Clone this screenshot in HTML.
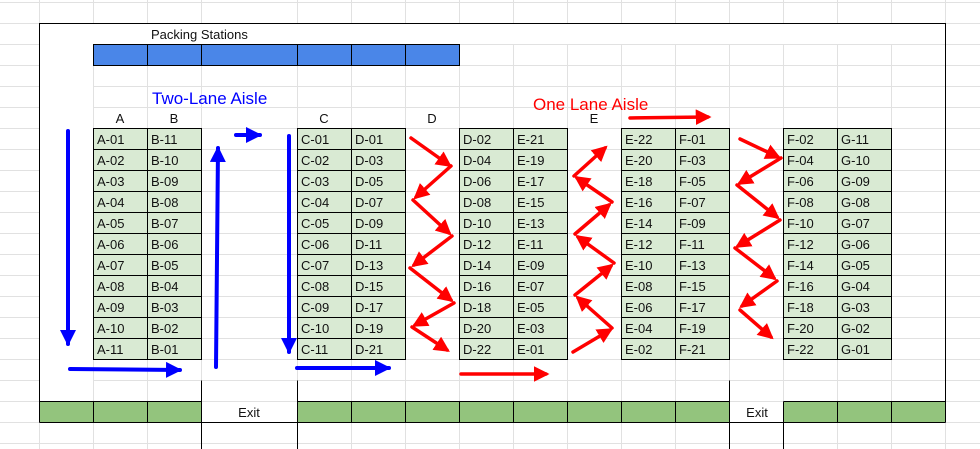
<!DOCTYPE html>
<html><head><meta charset="utf-8"><style>
html,body{margin:0;padding:0;background:#fff;}
svg{display:block;}
text{font-family:"Liberation Sans",Arial,sans-serif;font-size:13px;fill:#111;}
</style></head><body>
<svg width="980" height="449" viewBox="0 0 980 449" xmlns="http://www.w3.org/2000/svg">
<defs>
<marker id="rb" markerWidth="4.5" markerHeight="4.5" refX="3.5" refY="2.25" orient="auto" markerUnits="strokeWidth"><path d="M0,0 L4.5,2.25 L0,4.5 Z" fill="#ff0000"/></marker>
<marker id="bb" markerWidth="4" markerHeight="4" refX="3.5" refY="2" orient="auto" markerUnits="strokeWidth"><path d="M0,0 L4,2 L0,4 Z" fill="#0000ff"/></marker>
<g id="blk">
<rect x="0" y="0" width="108" height="231" fill="none" stroke="#000" stroke-width="1"/>
<path d="M54,0V231M0,21H108M0,42H108M0,63H108M0,84H108M0,105H108M0,126H108M0,147H108M0,168H108M0,189H108M0,210H108" fill="none" stroke="#000" stroke-width="1"/>
</g>
</defs>
<g stroke="#e1e1e1" stroke-width="1">
<line x1="39.5" y1="0" x2="39.5" y2="449"/><line x1="93.5" y1="0" x2="93.5" y2="449"/><line x1="147.5" y1="0" x2="147.5" y2="449"/><line x1="201.5" y1="0" x2="201.5" y2="449"/><line x1="297.5" y1="0" x2="297.5" y2="449"/><line x1="351.5" y1="0" x2="351.5" y2="449"/><line x1="405.5" y1="0" x2="405.5" y2="449"/><line x1="459.5" y1="0" x2="459.5" y2="449"/><line x1="513.5" y1="0" x2="513.5" y2="449"/><line x1="567.5" y1="0" x2="567.5" y2="449"/><line x1="621.5" y1="0" x2="621.5" y2="449"/><line x1="675.5" y1="0" x2="675.5" y2="449"/><line x1="729.5" y1="0" x2="729.5" y2="449"/><line x1="783.5" y1="0" x2="783.5" y2="449"/><line x1="837.5" y1="0" x2="837.5" y2="449"/><line x1="891.5" y1="0" x2="891.5" y2="449"/><line x1="945.5" y1="0" x2="945.5" y2="449"/>
<line x1="0" y1="2.5" x2="980" y2="2.5"/><line x1="0" y1="23.5" x2="980" y2="23.5"/><line x1="0" y1="44.5" x2="980" y2="44.5"/><line x1="0" y1="65.5" x2="980" y2="65.5"/><line x1="0" y1="86.5" x2="980" y2="86.5"/><line x1="0" y1="107.5" x2="980" y2="107.5"/><line x1="0" y1="128.5" x2="980" y2="128.5"/><line x1="0" y1="149.5" x2="980" y2="149.5"/><line x1="0" y1="170.5" x2="980" y2="170.5"/><line x1="0" y1="191.5" x2="980" y2="191.5"/><line x1="0" y1="212.5" x2="980" y2="212.5"/><line x1="0" y1="233.5" x2="980" y2="233.5"/><line x1="0" y1="254.5" x2="980" y2="254.5"/><line x1="0" y1="275.5" x2="980" y2="275.5"/><line x1="0" y1="296.5" x2="980" y2="296.5"/><line x1="0" y1="317.5" x2="980" y2="317.5"/><line x1="0" y1="338.5" x2="980" y2="338.5"/><line x1="0" y1="359.5" x2="980" y2="359.5"/><line x1="0" y1="380.5" x2="980" y2="380.5"/><line x1="0" y1="401.5" x2="980" y2="401.5"/><line x1="0" y1="422.5" x2="980" y2="422.5"/><line x1="0" y1="443.5" x2="980" y2="443.5"/>
</g>
<rect x="40" y="24" width="53" height="377" fill="#fff"/>
<rect x="40" y="24" width="905" height="20" fill="#fff"/>
<g fill="#d9ead3">
<rect x="93.5" y="128.5" width="108" height="231"/>
<rect x="297.5" y="128.5" width="108" height="231"/>
<rect x="459.5" y="128.5" width="108" height="231"/>
<rect x="621.5" y="128.5" width="108" height="231"/>
<rect x="783.5" y="128.5" width="108" height="231"/>
</g>
<rect x="93.5" y="44.5" width="366" height="21" fill="#4a86e8"/>
<g fill="#93c47d">
<rect x="39.5" y="401.5" width="162" height="21"/>
<rect x="297.5" y="401.5" width="432" height="21"/>
<rect x="783.5" y="401.5" width="162" height="21"/>
</g>
<g stroke="#000" stroke-width="1" fill="none">
<path d="M39.5,422.5 V23.5 H945.5 V422.5"/>
<rect x="93.5" y="44.5" width="366" height="21"/>
<path d="M147.5,44.5V65.5M201.5,44.5V65.5M297.5,44.5V65.5M351.5,44.5V65.5M405.5,44.5V65.5"/>
<path d="M39.5,401.5H201.5M297.5,401.5H729.5M783.5,401.5H945.5M39.5,422.5H945.5"/>
<path d="M93.5,401.5V422.5M147.5,401.5V422.5M351.5,401.5V422.5M405.5,401.5V422.5M459.5,401.5V422.5M513.5,401.5V422.5M567.5,401.5V422.5M621.5,401.5V422.5M675.5,401.5V422.5M837.5,401.5V422.5M891.5,401.5V422.5"/>
<path d="M201.5,380.5V449M297.5,380.5V449M729.5,380.5V449M783.5,401.5V449"/>
</g>
<use href="#blk" x="93.5" y="128.5"/>
<use href="#blk" x="297.5" y="128.5"/>
<use href="#blk" x="459.5" y="128.5"/>
<use href="#blk" x="621.5" y="128.5"/>
<use href="#blk" x="783.5" y="128.5"/>
<text x="151" y="39">Packing Stations</text>
<text x="120" y="123" text-anchor="middle">A</text>
<text x="174" y="123" text-anchor="middle">B</text>
<text x="324" y="123" text-anchor="middle">C</text>
<text x="432" y="123" text-anchor="middle">D</text>
<text x="594" y="123" text-anchor="middle">E</text>
<text x="249" y="417" text-anchor="middle">Exit</text>
<text x="757" y="417" text-anchor="middle">Exit</text>
<text x="152" y="104" style="font-size:17px;fill:#0000ff">Two-Lane Aisle</text>
<text x="533" y="110" style="font-size:17px;fill:#ff0000">One Lane Aisle</text>
<g>
<text x="97" y="144">A-01</text><text x="97" y="165">A-02</text><text x="97" y="186">A-03</text><text x="97" y="207">A-04</text><text x="97" y="228">A-05</text><text x="97" y="249">A-06</text><text x="97" y="270">A-07</text><text x="97" y="291">A-08</text><text x="97" y="312">A-09</text><text x="97" y="333">A-10</text><text x="97" y="354">A-11</text>
<text x="151" y="144">B-11</text><text x="151" y="165">B-10</text><text x="151" y="186">B-09</text><text x="151" y="207">B-08</text><text x="151" y="228">B-07</text><text x="151" y="249">B-06</text><text x="151" y="270">B-05</text><text x="151" y="291">B-04</text><text x="151" y="312">B-03</text><text x="151" y="333">B-02</text><text x="151" y="354">B-01</text>
<text x="301" y="144">C-01</text><text x="301" y="165">C-02</text><text x="301" y="186">C-03</text><text x="301" y="207">C-04</text><text x="301" y="228">C-05</text><text x="301" y="249">C-06</text><text x="301" y="270">C-07</text><text x="301" y="291">C-08</text><text x="301" y="312">C-09</text><text x="301" y="333">C-10</text><text x="301" y="354">C-11</text>
<text x="355" y="144">D-01</text><text x="355" y="165">D-03</text><text x="355" y="186">D-05</text><text x="355" y="207">D-07</text><text x="355" y="228">D-09</text><text x="355" y="249">D-11</text><text x="355" y="270">D-13</text><text x="355" y="291">D-15</text><text x="355" y="312">D-17</text><text x="355" y="333">D-19</text><text x="355" y="354">D-21</text>
<text x="463" y="144">D-02</text><text x="463" y="165">D-04</text><text x="463" y="186">D-06</text><text x="463" y="207">D-08</text><text x="463" y="228">D-10</text><text x="463" y="249">D-12</text><text x="463" y="270">D-14</text><text x="463" y="291">D-16</text><text x="463" y="312">D-18</text><text x="463" y="333">D-20</text><text x="463" y="354">D-22</text>
<text x="517" y="144">E-21</text><text x="517" y="165">E-19</text><text x="517" y="186">E-17</text><text x="517" y="207">E-15</text><text x="517" y="228">E-13</text><text x="517" y="249">E-11</text><text x="517" y="270">E-09</text><text x="517" y="291">E-07</text><text x="517" y="312">E-05</text><text x="517" y="333">E-03</text><text x="517" y="354">E-01</text>
<text x="625" y="144">E-22</text><text x="625" y="165">E-20</text><text x="625" y="186">E-18</text><text x="625" y="207">E-16</text><text x="625" y="228">E-14</text><text x="625" y="249">E-12</text><text x="625" y="270">E-10</text><text x="625" y="291">E-08</text><text x="625" y="312">E-06</text><text x="625" y="333">E-04</text><text x="625" y="354">E-02</text>
<text x="679" y="144">F-01</text><text x="679" y="165">F-03</text><text x="679" y="186">F-05</text><text x="679" y="207">F-07</text><text x="679" y="228">F-09</text><text x="679" y="249">F-11</text><text x="679" y="270">F-13</text><text x="679" y="291">F-15</text><text x="679" y="312">F-17</text><text x="679" y="333">F-19</text><text x="679" y="354">F-21</text>
<text x="787" y="144">F-02</text><text x="787" y="165">F-04</text><text x="787" y="186">F-06</text><text x="787" y="207">F-08</text><text x="787" y="228">F-10</text><text x="787" y="249">F-12</text><text x="787" y="270">F-14</text><text x="787" y="291">F-16</text><text x="787" y="312">F-18</text><text x="787" y="333">F-20</text><text x="787" y="354">F-22</text>
<text x="841" y="144">G-11</text><text x="841" y="165">G-10</text><text x="841" y="186">G-09</text><text x="841" y="207">G-08</text><text x="841" y="228">G-07</text><text x="841" y="249">G-06</text><text x="841" y="270">G-05</text><text x="841" y="291">G-04</text><text x="841" y="312">G-03</text><text x="841" y="333">G-02</text><text x="841" y="354">G-01</text>
</g>
<g stroke="#0000ff" stroke-width="4" fill="none" stroke-linecap="round">
<line x1="68" y1="131" x2="68" y2="344" marker-end="url(#bb)"/>
<line x1="70" y1="369" x2="180" y2="370" marker-end="url(#bb)"/>
<line x1="216" y1="367" x2="218" y2="148" marker-end="url(#bb)"/>
<line x1="236" y1="135" x2="260" y2="135" marker-end="url(#bb)"/>
<line x1="289" y1="136" x2="289" y2="352" marker-end="url(#bb)"/>
<line x1="297" y1="368" x2="389" y2="368" marker-end="url(#bb)"/>
</g>
<g stroke="#ff0000" stroke-width="3.5" fill="none" stroke-linecap="round">
<line x1="630" y1="118" x2="708" y2="117" marker-end="url(#rb)"/>
<line x1="461" y1="374" x2="546" y2="374" marker-end="url(#rb)"/>
<line x1="411" y1="138" x2="449" y2="165" marker-end="url(#rb)"/>
<line x1="451" y1="166" x2="416" y2="197" marker-end="url(#rb)"/>
<line x1="413" y1="200" x2="449" y2="233" marker-end="url(#rb)"/>
<line x1="452" y1="236" x2="414" y2="265" marker-end="url(#rb)"/>
<line x1="410" y1="268" x2="451" y2="300" marker-end="url(#rb)"/>
<line x1="454" y1="303" x2="415" y2="325" marker-end="url(#rb)"/>
<line x1="412" y1="327" x2="447" y2="350" marker-end="url(#rb)"/>
<line x1="573" y1="352" x2="610" y2="330" marker-end="url(#rb)"/>
<line x1="612" y1="328" x2="578" y2="298" marker-end="url(#rb)"/>
<line x1="575" y1="295" x2="611" y2="266" marker-end="url(#rb)"/>
<line x1="614" y1="263" x2="578" y2="237" marker-end="url(#rb)"/>
<line x1="575" y1="234" x2="609" y2="205" marker-end="url(#rb)"/>
<line x1="612" y1="202" x2="577" y2="178" marker-end="url(#rb)"/>
<line x1="574" y1="176" x2="605" y2="148" marker-end="url(#rb)"/>
<line x1="740" y1="139" x2="778" y2="157" marker-end="url(#rb)"/>
<line x1="781" y1="158" x2="740" y2="183" marker-end="url(#rb)"/>
<line x1="737" y1="185" x2="777" y2="217" marker-end="url(#rb)"/>
<line x1="780" y1="220" x2="738" y2="246" marker-end="url(#rb)"/>
<line x1="735" y1="248" x2="774" y2="278" marker-end="url(#rb)"/>
<line x1="777" y1="281" x2="742" y2="306" marker-end="url(#rb)"/>
<line x1="740" y1="310" x2="771" y2="337" marker-end="url(#rb)"/>
</g>
</svg>
</body></html>
